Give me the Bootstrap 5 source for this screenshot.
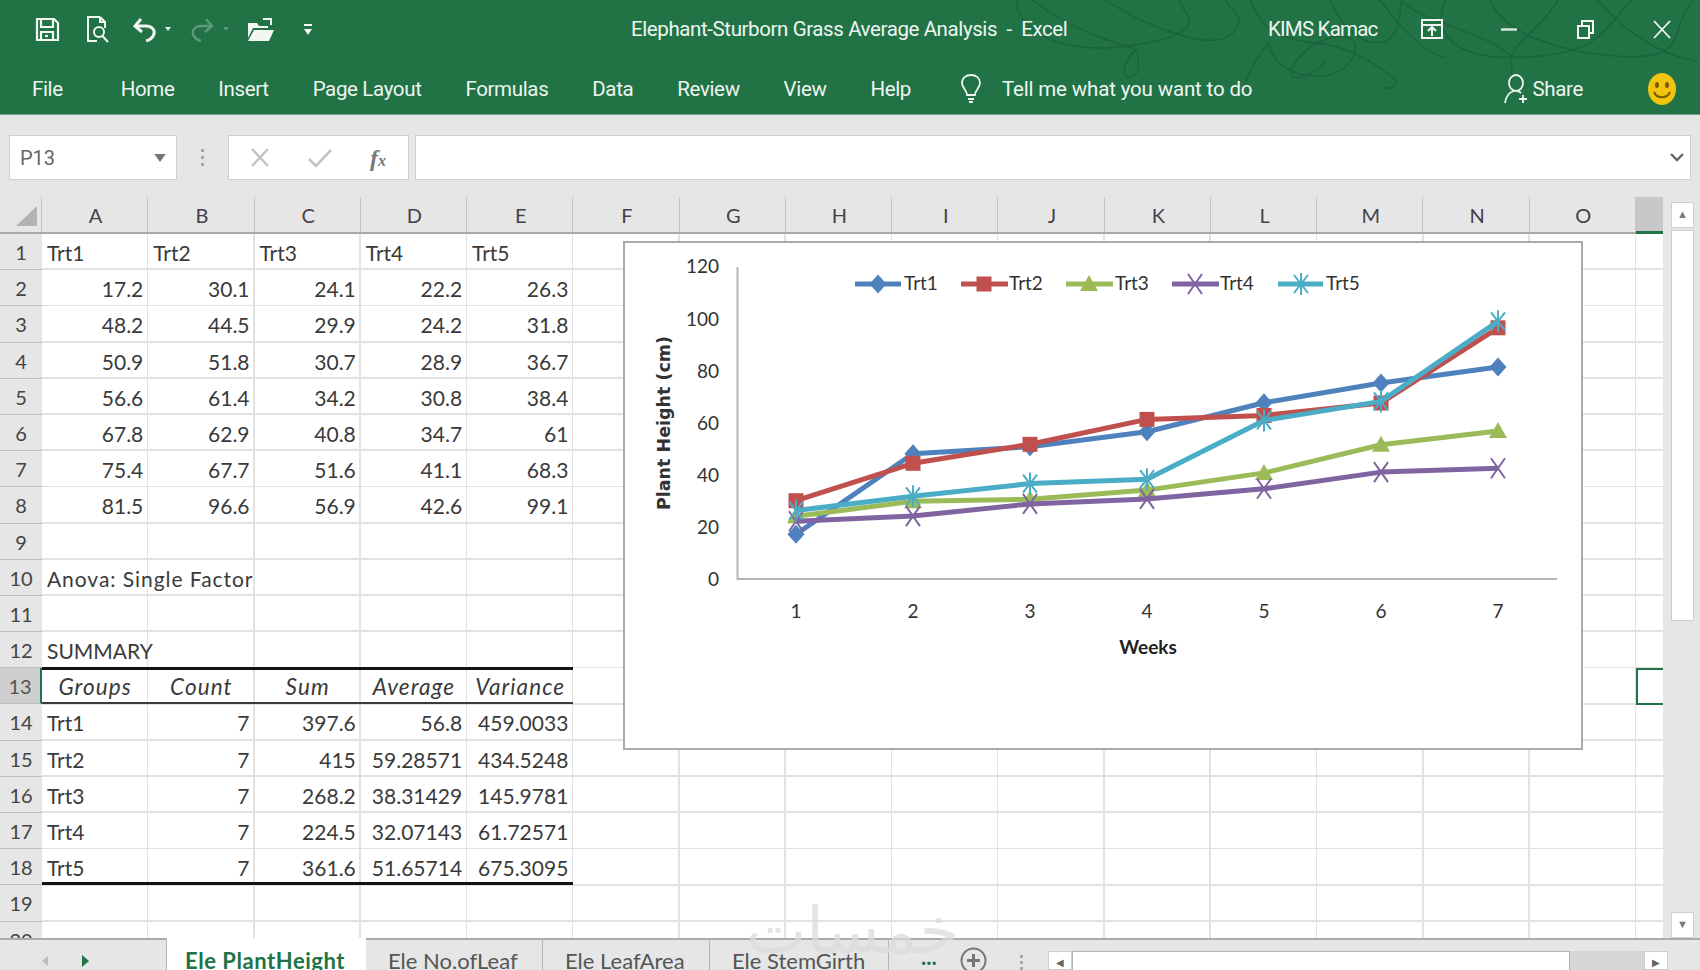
<!DOCTYPE html>
<html lang="en">
<head>
<meta charset="utf-8">
<title>Elephant-Sturborn Grass Average Analysis - Excel</title>
<link href="https://cdn.jsdelivr.net/npm/bootstrap@5.3.0/dist/css/bootstrap.min.css" rel="stylesheet">
<style>
html,body{height:100%;margin:0;overflow:hidden;background:#e6e6e6}
.xl-app{width:1700px;height:970px;font-family:Roboto,"Liberation Sans",sans-serif;color:#333}
.xl-ribbon{height:115px;background:#217346;color:#eef5f0;border-bottom:1px solid #6fa58a}
.xl-swirl{left:1000px;top:0;width:700px;height:115px}
.xl-swirl path{fill:none;stroke:#1a653b;stroke-width:1.6}
.xl-titlerow{height:58px;padding-left:35px}
.xl-titlerow svg,.xl-tabrow svg{flex:none}
.q1{margin-left:25px}.q2{margin-left:22px}.q3{margin-left:8px}.q4{margin-left:19px}.q5{margin-left:8px}.q6{margin-left:17px}.q7{margin-left:30px}
.xl-title{position:absolute;left:631px;top:14px;font-size:20.5px;letter-spacing:-.4px;white-space:nowrap}
.xl-user{position:absolute;left:1268px;top:14px;font-size:20.5px;letter-spacing:-.8px;white-space:nowrap}
.xl-winbtn{width:76.5px;height:58px}
.xl-tabrow{height:56px;padding-left:32px;padding-top:6px;font-size:20.5px;letter-spacing:-.35px;gap:43.9px}
.xl-filetab{margin-right:14px}
.xl-tell{margin-left:6px;gap:21px;letter-spacing:-.15px}
.xl-share{gap:5px;margin-right:65px}
.xl-smiley{margin-right:24px}
.xl-fbar{height:82px;padding:20px 9px 18px;background:#e6e6e6}
.xl-box{background:#fff;border:1px solid #cfcfcf;height:45px}
.xl-name{width:168px;padding:0 10px 0 10px;font-size:20px;color:#666}
.xl-dots{width:51px}
.xl-fbtns{width:181px;padding:0 22px 0 22px}
.xl-fx{font-family:"Liberation Serif",serif;font-size:24px;color:#777}
.xl-fx-sub{font-size:16px}
.xl-finput{width:1276px;margin-left:6px;padding:0 6px}
.xl-main{height:741px}
.xl-left{width:1663px}
.xl-colhead{height:37px;border-bottom:2px solid #a9a9a9;font-family:Lato,"Liberation Sans",sans-serif;font-size:20px;color:#46404a}
.xl-corner{width:42px;border-right:1px solid #c4c4c4;padding:9px 4px 0 16px}
.xl-col{width:106.27px;text-align:center;line-height:36px;border-right:1px solid #c4c4c4;padding-left:2px}
.xl-colon{width:27px;background:#c8c8c8;border-bottom:3px solid #217346;margin-bottom:-2px}
.xl-sheet{height:704px;background:#fff}
.xl-rowhead{width:42px;flex:none;background:#e6e6e6;font-family:Lato,"Liberation Sans",sans-serif;font-size:20px;color:#444}
.xl-rown{height:36.2px;line-height:36px;text-align:center;border-bottom:1.5px solid #bdbdbd}
.xl-rown-on{background:#cfcfcf;border-right:2px solid #217346;color:#555}
.xl-cells{flex:1;display:grid;grid-template-columns:repeat(5,106.27px);grid-auto-rows:36.2px;font-family:Lato,"Liberation Sans",sans-serif;font-size:21px;color:#3a3a3a;
background-image:repeating-linear-gradient(to right,transparent 0,transparent 104.77px,#e2e2e2 104.77px,#e2e2e2 106.27px),repeating-linear-gradient(to bottom,transparent 0,transparent 34.4px,#e2e2e2 34.4px,#e2e2e2 36.2px)}
.xl-c{padding:0 5px;line-height:37px;white-space:nowrap}
.xl-n{text-align:right}
.xl-blank{grid-column:1/-1}
.xl-wide{letter-spacing:.95px}
.xl-h{font-style:italic;font-size:22.5px;text-align:center;letter-spacing:1.1px;border-top:3px solid #141414;border-bottom:2.5px solid #3a3a3a;margin-top:-1px;line-height:34px;padding:0}
.xl-last{border-bottom:3px solid #141414;line-height:37px}
.xl-sel{left:1636px;top:434px;width:28px;height:37px;border:2px solid #217346;border-right:0}
.xl-chart{left:623px;top:7px;width:960px;height:509px;background:#fff;border:2px solid #ababab}
.xl-chart svg{display:block;width:100%;height:100%}
.xl-chart text{font-family:Lato,"Liberation Sans",sans-serif;font-size:19px;fill:#333}
.xl-chart .xl-bold{font-weight:700;fill:#222}
.xl-chart .xl-ytitle{font-family:"DejaVu Sans",sans-serif;font-weight:700;font-size:17.5px;fill:#333}
.xl-chart polyline{fill:none;stroke-width:5;stroke-linejoin:round}
.xl-vscroll{width:37px;background:#e6e6e6;padding:5px 6px 0 8px}
.xl-sbtn{background:#fff;border:1px solid #d0d0d0;height:26px;color:#777;font-size:11px;line-height:24px;text-align:center}
.xl-vthumb{background:#fff;border:1px solid #cdcdcd;height:391px;margin-top:2px}
.xl-vtrack{height:291px}
.xl-tabs{height:32px;background:linear-gradient(#ababab,#ababab) top/100% 2px no-repeat #e6e6e6;font-family:Lato,"Liberation Sans",sans-serif;font-size:22px;color:#555;overflow:hidden}
.xl-tabnav{width:167px;padding:14px 0 0 42px;gap:34px;border-right:1.5px solid #b5b5b5;flex:none}
.xl-tab{line-height:46px;padding-left:22px;border-right:1.5px solid #b5b5b5;white-space:nowrap;flex:none}
.xl-tw1{width:177px}.xl-tw2{width:167px}.xl-tw3{width:179px}
.xl-tab-on{width:199px;background:#fff;color:#217346;font-weight:700;padding-left:18px;letter-spacing:.55px;flex:none;white-space:nowrap;line-height:46px}
.xl-more{width:71px;padding-left:32px;color:#217346;font-weight:700;line-height:38px;flex:none}
.xl-plus{margin-top:9px;flex:none}
.xl-fdots{margin:17px 0 0 33px;flex:none}
.xl-hscroll{margin:13px 0 0 25px;height:19px;flex:none}
.xl-hbtn{width:24px;background:#fff;border:1px solid #cdcdcd;font-size:10px;text-align:center;line-height:20px;color:#666;flex:none}
.xl-hthumb{width:498px;background:#fff;border:1px solid #b5b5b5;border-width:1px 1px 0;flex:none}
.xl-htrack{width:74px;background:#d6d6d6;flex:none}
.xl-watermark{left:746px;top:893px;font-family:"DejaVu Sans",sans-serif;font-size:64px;line-height:1.2;color:#dcdcdc;opacity:.75;pointer-events:none;z-index:5}
</style>
</head>
<body>
<div class="xl-app position-relative d-flex flex-column">

<header class="xl-ribbon position-relative">
  <svg class="xl-swirl position-absolute" viewBox="0 0 700 116" aria-hidden="true">
    <path d="M13 0C18 43 80 57 147 43S178 12 178 0"/>
    <path d="M103 0C150 30 214 53 232 33S222 8 225 0"/>
    <path d="M30 0C60 25 100 40 134 50C116 67 122 82 130 78S138 62 134 50"/>
    <path d="M268 43C272 80 339 90 353 57S312 35 295 63S317 75 325 62"/>
    <path d="M250 0C260 35 290 40 312 43C345 45 370 60 393 78C400 82 395 92 385 88"/>
    <path d="M268 43C258 55 250 70 245 82"/>
    <path d="M330 0C340 25 360 45 380 43S400 15 402 0"/>
    <path d="M446 0C429 43 469 63 536 57S603 33 634 0"/>
    <path d="M491 0C505 33 558 53 625 57S670 33 696 0"/>
    <path d="M402 0C415 20 490 33 513 57V82"/>
    <path d="M600 0C625 30 660 55 700 62"/>
    <path d="M560 0C545 25 515 45 513 57"/>
    <path d="M380 0C410 40 430 55 446 58"/>
  </svg>
  <div class="xl-titlerow d-flex align-items-center position-relative">
    <svg width="25" height="25" viewBox="0 0 25 25" fill="none" stroke="#f2f7f4" stroke-width="2.2"><path d="M2 2H19L23 6V23H2Z"/><path d="M6 2V10H18V2M6 23V15H18V23"/><path d="M10 19H13"/></svg>
    <svg class="q1" width="25" height="28" viewBox="0 0 25 28" fill="none" stroke="#f2f7f4" stroke-width="2"><path d="M15 2H3V26H12"/><path d="M15 2L20 7V13M15 2V7H20"/><circle cx="14" cy="17" r="5"/><path d="M17.5 21L23 27"/></svg>
    <svg class="q2" width="25" height="25" viewBox="0 0 25 25" fill="none" stroke="#f2f7f4" stroke-width="3"><path d="M9 2L3 9L10 15"/><path d="M3 9H14C20 9 23 13 22 17C21 20 18 23 14 24"/></svg>
    <svg class="q3" width="6" height="4" viewBox="0 0 6 4" fill="#f2f7f4"><path d="M0 0H6L3 4Z"/></svg>
    <svg class="q4" width="25" height="25" viewBox="0 0 25 25" fill="none" stroke="#5d9a79" stroke-width="2.4"><path d="M16 2L22 9L15 15"/><path d="M22 9H11C5 9 2 13 3 17C4 20 7 23 11 24"/></svg>
    <svg class="q5" width="6" height="4" viewBox="0 0 6 4" fill="#5d9a79"><path d="M0 0H6L3 4Z"/></svg>
    <svg class="q6" width="28" height="24" viewBox="0 0 28 24" fill="#f2f7f4"><path d="M2 6H11L13 9H22V11H7L2 21Z"/><path d="M8 13H28L23 24H2Z"/><path d="M17 1H26V8H24V3H17Z"/></svg>
    <svg class="q7" width="8" height="11" viewBox="0 0 8 11" fill="#f2f7f4"><path d="M0 0H8V2H0ZM0 5H8L4 11Z"/></svg>
    <div class="xl-title">Elephant-Sturborn Grass Average Analysis&nbsp; -&nbsp; Excel</div>
    <div class="xl-user">KIMS Kamac</div>
    <div class="ms-auto d-flex">
      <div class="xl-winbtn d-flex align-items-center justify-content-center"><svg width="22" height="20" viewBox="0 0 22 20" fill="none" stroke="#f2f7f4" stroke-width="2"><path d="M1 1H21V19H1ZM1 6H21"/><path d="M11 17V9M7 12L11 8L15 12"/></svg></div>
      <div class="xl-winbtn d-flex align-items-center justify-content-center"><svg width="16" height="3" viewBox="0 0 16 3"><path d="M0 1.5H16" stroke="#dfeae4" stroke-width="2.4"/></svg></div>
      <div class="xl-winbtn d-flex align-items-center justify-content-center"><svg width="17" height="19" viewBox="0 0 17 19" fill="none" stroke="#f2f7f4" stroke-width="2"><path d="M1 6H12V18H1Z"/><path d="M5 6V1H16V13H12"/></svg></div>
      <div class="xl-winbtn d-flex align-items-center justify-content-center"><svg width="18" height="19" viewBox="0 0 18 19" fill="none" stroke="#f2f7f4" stroke-width="1.8"><path d="M1 1L17 18M17 1L1 18"/></svg></div>
    </div>
  </div>
  <nav class="xl-tabrow d-flex align-items-center position-relative">
    <span class="xl-filetab">File</span><span>Home</span><span>Insert</span><span>Page Layout</span><span>Formulas</span><span>Data</span><span>Review</span><span>View</span><span>Help</span>
    <div class="xl-tell d-flex align-items-center">
      <svg width="20" height="30" viewBox="0 0 20 30" fill="none" stroke="#eef5f0" stroke-width="1.8"><path d="M6 21C6 16 1 14 1 9C1 4 5 1 10 1S19 4 19 9C19 14 14 16 14 21Z"/><path d="M7 25H13M8 28H12"/></svg>
      <span>Tell me what you want to do</span>
    </div>
    <div class="ms-auto d-flex align-items-center">
      <div class="xl-share d-flex align-items-center">
        <svg width="24" height="30" viewBox="0 0 24 30" fill="none" stroke="#eef5f0" stroke-width="1.8"><ellipse cx="12" cy="9" rx="7" ry="8"/><path d="M1 29C2 22 6 18 10 17M14 17C15 18 16 18 17 19"/><path d="M19 21V29M15 25H23"/></svg>
        <span>Share</span>
      </div>
      <svg class="xl-smiley" width="28" height="32" viewBox="0 0 28 32"><ellipse cx="14" cy="16" rx="14" ry="16" fill="#f1c40f"/><ellipse cx="9" cy="12" rx="2" ry="3" fill="#7a5c00"/><ellipse cx="19" cy="12" rx="2" ry="3" fill="#7a5c00"/><path d="M6 19C9 26 19 26 22 19" fill="none" stroke="#7a5c00" stroke-width="2"/></svg>
    </div>
  </nav>
</header>

<section class="xl-fbar d-flex align-items-stretch">
  <div class="xl-box xl-name d-flex align-items-center justify-content-between"><span>P13</span><svg width="12" height="8" viewBox="0 0 13 9" fill="#777"><path d="M0 0H13L6.5 9Z"/></svg></div>
  <div class="xl-dots d-flex align-items-center justify-content-center"><svg width="3" height="17" viewBox="0 0 3 17" fill="#a8a8a8"><path d="M0 0H3V3H0ZM0 7H3V10H0ZM0 14H3V17H0Z"/></svg></div>
  <div class="xl-box xl-fbtns d-flex align-items-center justify-content-between">
    <svg width="18" height="19" viewBox="0 0 18 19" fill="none" stroke="#c4c4c4" stroke-width="2.4"><path d="M1 1L17 18M17 1L1 18"/></svg>
    <svg width="24" height="20" viewBox="0 0 24 20" fill="none" stroke="#c4c4c4" stroke-width="2.6"><path d="M1 11L8 18L23 2"/></svg>
    <span class="xl-fx fst-italic fw-bold">f<span class="xl-fx-sub">x</span></span>
  </div>
  <div class="xl-box xl-finput d-flex align-items-center justify-content-end"><svg width="14" height="9" viewBox="0 0 14 9" fill="none" stroke="#666" stroke-width="2.4"><path d="M1 1L7 7L13 1"/></svg></div>
</section>

<div class="xl-main d-flex">
  <div class="xl-left d-flex flex-column">
    <div class="xl-colhead d-flex">
      <div class="xl-corner"><svg class="d-block" width="21" height="20" viewBox="0 0 21 20" fill="#b3b3b3"><path d="M21 0V20H0Z"/></svg></div>
      <div class="xl-col">A</div><div class="xl-col">B</div><div class="xl-col">C</div><div class="xl-col">D</div><div class="xl-col">E</div><div class="xl-col">F</div><div class="xl-col">G</div><div class="xl-col">H</div><div class="xl-col">I</div><div class="xl-col">J</div><div class="xl-col">K</div><div class="xl-col">L</div><div class="xl-col">M</div><div class="xl-col">N</div><div class="xl-col">O</div>
      <div class="xl-colon"></div>
    </div>
    <div class="xl-sheet d-flex position-relative overflow-hidden">
      <div class="xl-rowhead">
        <div class="xl-rown">1</div><div class="xl-rown">2</div><div class="xl-rown">3</div><div class="xl-rown">4</div><div class="xl-rown">5</div><div class="xl-rown">6</div><div class="xl-rown">7</div><div class="xl-rown">8</div><div class="xl-rown">9</div><div class="xl-rown">10</div><div class="xl-rown">11</div><div class="xl-rown">12</div><div class="xl-rown xl-rown-on">13</div><div class="xl-rown">14</div><div class="xl-rown">15</div><div class="xl-rown">16</div><div class="xl-rown">17</div><div class="xl-rown">18</div><div class="xl-rown">19</div><div class="xl-rown">20</div>
      </div>
      <div class="xl-cells">
        <div class="xl-c">Trt1</div><div class="xl-c">Trt2</div><div class="xl-c">Trt3</div><div class="xl-c">Trt4</div><div class="xl-c">Trt5</div>
        <div class="xl-c xl-n">17.2</div><div class="xl-c xl-n">30.1</div><div class="xl-c xl-n">24.1</div><div class="xl-c xl-n">22.2</div><div class="xl-c xl-n">26.3</div>
        <div class="xl-c xl-n">48.2</div><div class="xl-c xl-n">44.5</div><div class="xl-c xl-n">29.9</div><div class="xl-c xl-n">24.2</div><div class="xl-c xl-n">31.8</div>
        <div class="xl-c xl-n">50.9</div><div class="xl-c xl-n">51.8</div><div class="xl-c xl-n">30.7</div><div class="xl-c xl-n">28.9</div><div class="xl-c xl-n">36.7</div>
        <div class="xl-c xl-n">56.6</div><div class="xl-c xl-n">61.4</div><div class="xl-c xl-n">34.2</div><div class="xl-c xl-n">30.8</div><div class="xl-c xl-n">38.4</div>
        <div class="xl-c xl-n">67.8</div><div class="xl-c xl-n">62.9</div><div class="xl-c xl-n">40.8</div><div class="xl-c xl-n">34.7</div><div class="xl-c xl-n">61</div>
        <div class="xl-c xl-n">75.4</div><div class="xl-c xl-n">67.7</div><div class="xl-c xl-n">51.6</div><div class="xl-c xl-n">41.1</div><div class="xl-c xl-n">68.3</div>
        <div class="xl-c xl-n">81.5</div><div class="xl-c xl-n">96.6</div><div class="xl-c xl-n">56.9</div><div class="xl-c xl-n">42.6</div><div class="xl-c xl-n">99.1</div>
        <div class="xl-blank"></div>
        <div class="xl-c xl-blank xl-wide">Anova: Single Factor</div>
        <div class="xl-blank"></div>
        <div class="xl-c xl-blank">SUMMARY</div>
        <div class="xl-c xl-h">Groups</div><div class="xl-c xl-h">Count</div><div class="xl-c xl-h">Sum</div><div class="xl-c xl-h">Average</div><div class="xl-c xl-h">Variance</div>
        <div class="xl-c">Trt1</div><div class="xl-c xl-n">7</div><div class="xl-c xl-n">397.6</div><div class="xl-c xl-n">56.8</div><div class="xl-c xl-n">459.0033</div>
        <div class="xl-c">Trt2</div><div class="xl-c xl-n">7</div><div class="xl-c xl-n">415</div><div class="xl-c xl-n">59.28571</div><div class="xl-c xl-n">434.5248</div>
        <div class="xl-c">Trt3</div><div class="xl-c xl-n">7</div><div class="xl-c xl-n">268.2</div><div class="xl-c xl-n">38.31429</div><div class="xl-c xl-n">145.9781</div>
        <div class="xl-c">Trt4</div><div class="xl-c xl-n">7</div><div class="xl-c xl-n">224.5</div><div class="xl-c xl-n">32.07143</div><div class="xl-c xl-n">61.72571</div>
        <div class="xl-c xl-last">Trt5</div><div class="xl-c xl-n xl-last">7</div><div class="xl-c xl-n xl-last">361.6</div><div class="xl-c xl-n xl-last">51.65714</div><div class="xl-c xl-n xl-last">675.3095</div>
      </div>
      <div class="xl-sel position-absolute"></div>
      <figure class="xl-chart position-absolute m-0">
        <svg viewBox="625 243 956 505" aria-label="Plant height by week">
          <defs>
            <path id="mk-d" d="M0-9.5L8.5 0L0 9.5L-8.5 0Z"/>
            <rect id="mk-s" x="-7.5" y="-7.5" width="15" height="15"/>
            <path id="mk-t" d="M0-9L9 7H-9Z"/>
            <path id="mk-x" d="M-7-10L7 10M7-10L-7 10" fill="none" stroke-width="2"/>
            <path id="mk-a" d="M-7-9L7 9M7-9L-7 9M0-11V11" fill="none" stroke-width="2"/>
          </defs>
          <path d="M737.5 267V579H1557" fill="none" stroke="#b5b5b5" stroke-width="2"/>
          <g text-anchor="end">
            <text x="719" y="273">120</text><text x="719" y="326">100</text><text x="719" y="378">80</text><text x="719" y="430">60</text><text x="719" y="482">40</text><text x="719" y="534">20</text><text x="719" y="586">0</text>
          </g>
          <g text-anchor="middle">
            <text x="796" y="618">1</text><text x="913" y="618">2</text><text x="1030" y="618">3</text><text x="1147" y="618">4</text><text x="1264" y="618">5</text><text x="1381" y="618">6</text><text x="1498" y="618">7</text>
            <text class="xl-bold" x="1148" y="654">Weeks</text>
            <text class="xl-ytitle" transform="translate(670 423) rotate(-90)">Plant Height (cm)</text>
          </g>
          <polyline stroke="#4f81bd" points="796,534.3 913,453.7 1030,446.7 1147,431.8 1264,402.7 1381,383 1498,367.1"/>
          <g fill="#4f81bd"><use href="#mk-d" x="796" y="534.3"/><use href="#mk-d" x="913" y="453.7"/><use href="#mk-d" x="1030" y="446.7"/><use href="#mk-d" x="1147" y="431.8"/><use href="#mk-d" x="1264" y="402.7"/><use href="#mk-d" x="1381" y="383"/><use href="#mk-d" x="1498" y="367.1"/></g>
          <polyline stroke="#c0504d" points="796,500.7 913,463.3 1030,444.3 1147,419.4 1264,415.5 1381,403 1498,327.8"/>
          <g fill="#c0504d"><use href="#mk-s" x="796" y="500.7"/><use href="#mk-s" x="913" y="463.3"/><use href="#mk-s" x="1030" y="444.3"/><use href="#mk-s" x="1147" y="419.4"/><use href="#mk-s" x="1264" y="415.5"/><use href="#mk-s" x="1381" y="403"/><use href="#mk-s" x="1498" y="327.8"/></g>
          <polyline stroke="#9bbb59" points="796,516.3 913,501.3 1030,499.2 1147,490.1 1264,472.9 1381,444.8 1498,431.1"/>
          <g fill="#9bbb59"><use href="#mk-t" x="796" y="516.3"/><use href="#mk-t" x="913" y="501.3"/><use href="#mk-t" x="1030" y="499.2"/><use href="#mk-t" x="1147" y="490.1"/><use href="#mk-t" x="1264" y="472.9"/><use href="#mk-t" x="1381" y="444.8"/><use href="#mk-t" x="1498" y="431.1"/></g>
          <polyline stroke="#8064a2" points="796,521.3 913,516.1 1030,503.9 1147,498.9 1264,488.8 1381,472.1 1498,468.2"/>
          <g stroke="#8064a2"><use href="#mk-x" x="796" y="521.3"/><use href="#mk-x" x="913" y="516.1"/><use href="#mk-x" x="1030" y="503.9"/><use href="#mk-x" x="1147" y="498.9"/><use href="#mk-x" x="1264" y="488.8"/><use href="#mk-x" x="1381" y="472.1"/><use href="#mk-x" x="1498" y="468.2"/></g>
          <polyline stroke="#4bacc6" points="796,510.6 913,496.3 1030,483.6 1147,479.2 1264,420.4 1381,401.4 1498,321.3"/>
          <g stroke="#4bacc6"><use href="#mk-a" x="796" y="510.6"/><use href="#mk-a" x="913" y="496.3"/><use href="#mk-a" x="1030" y="483.6"/><use href="#mk-a" x="1147" y="479.2"/><use href="#mk-a" x="1264" y="420.4"/><use href="#mk-a" x="1381" y="401.4"/><use href="#mk-a" x="1498" y="321.3"/></g>
          <path d="M855 284H901" stroke="#4f81bd" stroke-width="5"/><use href="#mk-d" x="878" y="284" fill="#4f81bd"/><text x="904" y="290">Trt1</text>
          <path d="M961 284H1008" stroke="#c0504d" stroke-width="5"/><use href="#mk-s" x="984" y="284" fill="#c0504d"/><text x="1009" y="290">Trt2</text>
          <path d="M1066 284H1113" stroke="#9bbb59" stroke-width="5"/><use href="#mk-t" x="1089" y="284" fill="#9bbb59"/><text x="1115" y="290">Trt3</text>
          <path d="M1172 284H1219" stroke="#8064a2" stroke-width="5"/><use href="#mk-x" x="1195" y="284" stroke="#8064a2"/><text x="1220" y="290">Trt4</text>
          <path d="M1278 284H1323" stroke="#4bacc6" stroke-width="5"/><use href="#mk-a" x="1301" y="284" stroke="#4bacc6"/><text x="1326" y="290">Trt5</text>
        </svg>
      </figure>
    </div>
  </div>
  <aside class="xl-vscroll">
    <div class="xl-sbtn">&#9650;</div>
    <div class="xl-vthumb"></div>
    <div class="xl-vtrack"></div>
    <div class="xl-sbtn">&#9660;</div>
  </aside>
</div>

<footer class="xl-tabs d-flex">
  <div class="xl-tabnav d-flex align-items-center">
    <svg width="6" height="10" viewBox="0 0 6 10" fill="#bdbdbd"><path d="M6 0V10L0 5Z"/></svg>
    <svg width="7" height="12" viewBox="0 0 7 12" fill="#217346"><path d="M0 0V12L7 6Z"/></svg>
  </div>
  <div class="xl-tab-on">Ele PlantHeight</div>
  <div class="xl-tab xl-tw1">Ele No.ofLeaf</div>
  <div class="xl-tab xl-tw2">Ele LeafArea</div>
  <div class="xl-tab xl-tw3">Ele StemGirth</div>
  <div class="xl-more">...</div>
  <svg class="xl-plus" width="27" height="27" viewBox="0 0 27 27" fill="none" stroke="#777" stroke-width="2"><circle cx="13.5" cy="13.5" r="12"/><path d="M13.5 7V20M7 13.5H20" stroke-width="3"/></svg>
  <svg class="xl-fdots" width="3" height="15" viewBox="0 0 3 15" fill="#a8a8a8"><path d="M0 0H3V3H0ZM0 6H3V9H0ZM0 12H3V15H0Z"/></svg>
  <div class="xl-hscroll d-flex">
    <div class="xl-hbtn">&#9664;</div><div class="xl-hthumb"></div><div class="xl-htrack"></div><div class="xl-hbtn">&#9654;</div>
  </div>
</footer>
<div class="xl-watermark position-absolute">خمسات</div>
</div>
</body>
</html>
